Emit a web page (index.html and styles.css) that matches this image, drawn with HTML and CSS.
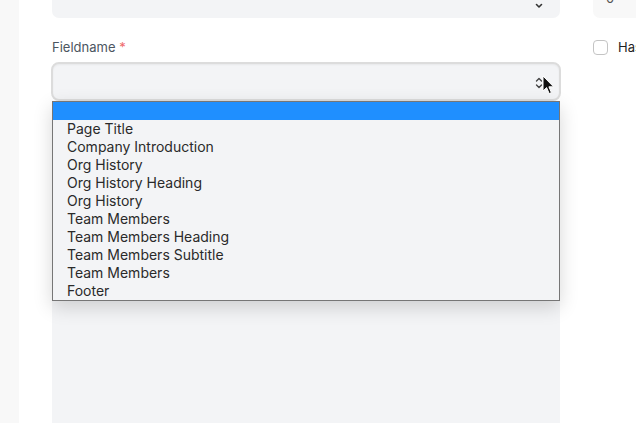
FILE: index.html
```html
<!DOCTYPE html>
<html>
<head>
<meta charset="utf-8">
<link rel="stylesheet" href="styles.css">
</head>
<body>
<div class="page">
  <div class="sidebar"></div>
  <div class="main">
    <div class="col-left">
      <div class="top-control">
        <svg class="top-chevron" width="8" height="6" viewBox="0 0 8 6"><path d="M1.5 1.5 L4 4 L6.5 1.5" fill="none" stroke="#333" stroke-width="1.6" stroke-linecap="round" stroke-linejoin="round"/></svg>
      </div>
      <div class="field">
        <label class="label">Fieldname <span class="req">*</span></label>
        <div class="select-wrap">
          <div class="select">
            <svg class="updown" width="10" height="14" viewBox="0 0 10 14"><path d="M2.5 5 L5 2.5 L7.5 5 M2.5 9 L5 11.5 L7.5 9" fill="none" stroke="#444" stroke-width="1.4" stroke-linecap="round" stroke-linejoin="round"/></svg>
            <svg class="cursor" width="13" height="21" viewBox="0 0 13 21"><path d="M1 1 L1 16 L4.6 12.6 L7.2 18.6 L9.4 17.6 L6.9 11.8 L11.6 11.8 Z" fill="#111" stroke="#fff" stroke-width="1" stroke-linejoin="round"/></svg>
          </div>
          <ul class="dropdown">
            <li class="opt selected">&nbsp;</li>
            <li class="opt">Page Title</li>
            <li class="opt">Company Introduction</li>
            <li class="opt">Org History</li>
            <li class="opt">Org History Heading</li>
            <li class="opt">Org History</li>
            <li class="opt">Team Members</li>
            <li class="opt">Team Members Heading</li>
            <li class="opt">Team Members Subtitle</li>
            <li class="opt">Team Members</li>
            <li class="opt">Footer</li>
          </ul>
        </div>
        <div class="textarea"></div>
      </div>
    </div>
    <div class="col-right">
      <div class="num-box"><span class="num">0</span></div>
      <div class="check-row">
        <span class="checkbox"></span>
        <span class="check-label">Has</span>
      </div>
    </div>
  </div>
</div>
</body>
</html>
```

FILE: styles.css
```css
* { box-sizing: border-box; }
html, body {
  margin: 0;
  padding: 0;
  width: 636px;
  height: 423px;
  overflow: hidden;
  background: #fff;
  font-family: Inter, "Noto Sans", sans-serif;
}
.page {
  display: flex;
  height: 423px;
}
.sidebar {
  width: 19px;
  flex: none;
  background: #f8f8f8;
}
.main {
  flex: 1;
  display: flex;
  gap: 33px;
  padding-left: 33px;
  min-width: 0;
}
.col-left {
  width: 508px;
  flex: none;
  display: flex;
  flex-direction: column;
}
.top-control {
  height: 18px;
  background: #f3f4f6;
  border-radius: 0 0 7px 7px;
  position: relative;
  display: flex;
  justify-content: flex-end;
  align-items: flex-start;
  padding-right: 17px;
  padding-top: 3px;
}
.field {
  display: flex;
  flex-direction: column;
  flex: 1;
  padding-top: 21px;
}
.label {
  font-size: 13px;
  line-height: 16px;
  color: #4c5661;
  height: 16px;
  margin-bottom: 7px;
}
.req { color: #ef6b6b; }
.select-wrap {
  position: relative;
  z-index: 2;
}
.select {
  height: 39px;
  margin: 0 -1px;
  background: #f3f4f6;
  border: 2px solid #dcdcdc;
  border-radius: 8px;
  box-shadow: inset 0 1px 2px rgba(0,0,0,0.05);
  position: relative;
}
.updown {
  position: absolute;
  right: 15px;
  top: 12px;
}
.cursor {
  position: absolute;
  left: 489px;
  top: 11px;
}
.dropdown {
  position: absolute;
  left: 0;
  right: 0;
  top: 39px;
  margin: 0;
  padding: 0;
  list-style: none;
  background: #f3f4f6;
  border: 1px solid #767676;
  box-shadow: 0 6px 18px rgba(0,0,0,0.16);
}
.opt {
  height: 18px;
  line-height: 18px;
  font-size: 14px;
  color: #2a2a2a;
  padding-left: 14px;
  white-space: nowrap;
}
.opt.selected {
  background: #1f8fff;
}
.textarea {
  flex: 1;
  margin-top: 20px;
  background: #f3f4f6;
}
.col-right {
  flex: 1;
  min-width: 0;
  display: flex;
  flex-direction: column;
}
.num-box {
  height: 18px;
  background: #f8f8f8;
  border-radius: 0 0 0 7px;
  position: relative;
  overflow: hidden;
  padding-left: 13px;
}
.num {
  display: block;
  font-size: 13px;
  line-height: 13px;
  margin-top: -8px;
  color: #555;
}
.check-row {
  display: flex;
  align-items: center;
  margin-top: 21px;
  gap: 10px;
}
.checkbox {
  width: 15px;
  height: 15px;
  border: 1px solid #c4c4c4;
  border-radius: 4px;
  background: #fff;
  flex: none;
}
.check-label {
  font-size: 13px;
  color: #1f1f1f;
  white-space: nowrap;
}
```
